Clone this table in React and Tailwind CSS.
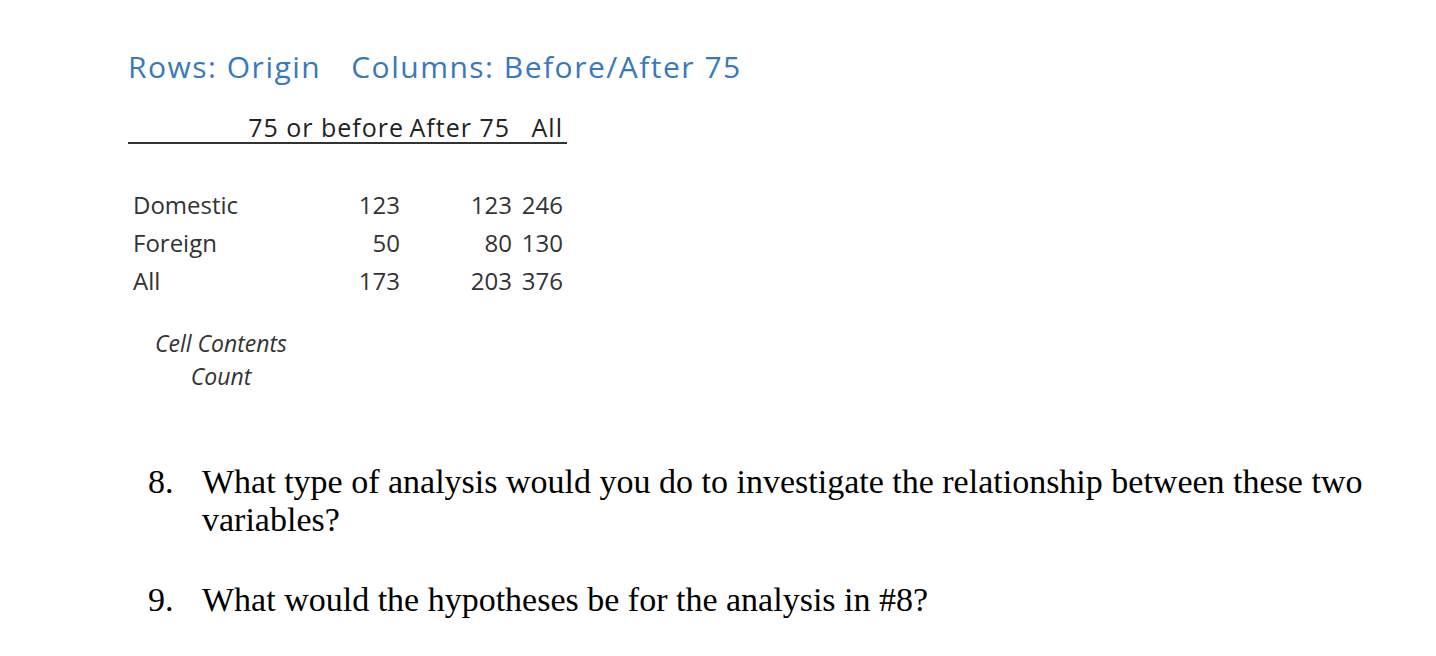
import React from 'react';

const rows = [
  { label: 'Domestic', before: 123, after: 123, all: 246 },
  { label: 'Foreign', before: 50, after: 80, all: 130 },
  { label: 'All', before: 173, after: 203, all: 376 },
];

const App = () => {
  return (
    <div className="w-[1436px] h-[656px] bg-white overflow-hidden">
      {/* Minitab output */}
      <div className="pl-[128px] pt-[47px] font-['Open_Sans',sans-serif]">
        <h2 className="text-[30px] leading-[40px] font-medium text-[#3878bc] tracking-[1.5px]">
          Rows: Origin<span className="inline-block w-[30px]" />Columns: Before/After 75
        </h2>

        <div className="w-[439px] mt-[25px]">
          <div className="grid grid-cols-[117px_159px_106px_53px] border-b-2 border-[#333] text-[25px] leading-[30px] text-[#222] tracking-[1px]">
            <span />
            <span className="text-right">75 or before</span>
            <span className="text-right">After 75</span>
            <span className="text-right">All</span>
          </div>

          <div className="mt-[42px] text-[#333] text-[24px] leading-[38px]">
            {rows.map((r) => (
              <div key={r.label} className="grid grid-cols-[200px_67px_112px_51px] pl-[5px]">
                <span>{r.label}</span>
                <span className="text-right">{r.before}</span>
                <span className="text-right">{r.after}</span>
                <span className="text-right">{r.all}</span>
              </div>
            ))}
          </div>
        </div>

        <div className="mt-[27px] w-[186px] text-center italic text-[#333] text-[23px] leading-[33px]">
          <p>Cell Contents</p>
          <p>Count</p>
        </div>
      </div>

      {/* Questions */}
      <ol className="mt-[70px] pl-[148px] pr-[60px] font-['Liberation_Serif',serif] text-[34px] leading-[38px] text-black">
        <li className="flex">
          <span className="w-[54px] shrink-0">8.</span>
          <span>What type of analysis would you do to investigate the relationship between these two variables?</span>
        </li>
        <li className="flex mt-[42px]">
          <span className="w-[54px] shrink-0">9.</span>
          <span>What would the hypotheses be for the analysis in #8?</span>
        </li>
      </ol>
    </div>
  );
};

export default App;
